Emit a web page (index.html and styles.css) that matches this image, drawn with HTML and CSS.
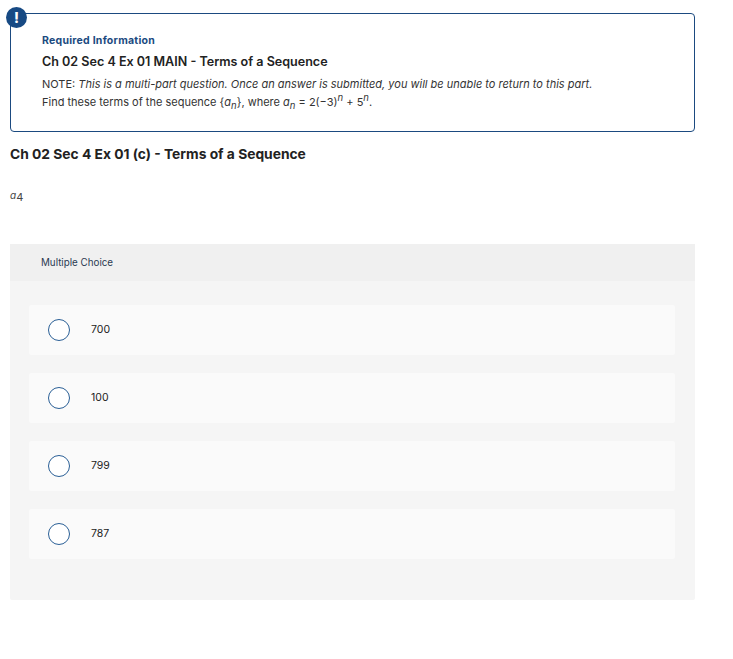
FILE: index.html
```html
<!DOCTYPE html>
<html lang="en">
<head>
    <meta charset="UTF-8">
    <meta name="viewport" content="width=device-width, initial-scale=1.0">
    <title>Ch 02 Sec 4 Ex 01 (c) - Terms of a Sequence</title>
    <link rel="stylesheet" href="styles.css">
</head>
<body>
    <div class="info-box">
        <div class="info-icon">!</div>
        <div class="info-label">Required Information</div>
        <h2 class="info-title">Ch 02 Sec 4 Ex 01 MAIN - Terms of a Sequence</h2>
        <p class="info-note">NOTE: <em>This is a multi-part question. Once an answer is submitted, you will be unable to return to this part.</em></p>
        <p class="info-text">Find these terms of the sequence {<i>a<sub>n</sub></i>}, where <i>a<sub>n</sub></i> = 2(&minus;3)<sup><i>n</i></sup> + 5<sup><i>n</i></sup>.</p>
    </div>

    <h1 class="question-title">Ch 02 Sec 4 Ex 01 (c) - Terms of a Sequence</h1>
    <p class="question-term"><i>a</i><span class="term-index">4</span></p>

    <div class="answer-panel">
        <div class="answer-header">Multiple Choice</div>
        <div class="answer-list">
            <label class="answer-row"><span class="radio"></span><span class="answer-text">700</span></label>
            <label class="answer-row"><span class="radio"></span><span class="answer-text">100</span></label>
            <label class="answer-row"><span class="radio"></span><span class="answer-text">799</span></label>
            <label class="answer-row"><span class="radio"></span><span class="answer-text">787</span></label>
        </div>
    </div>
</body>
</html>
```

FILE: styles.css
```css
* {
    margin: 0;
    padding: 0;
    box-sizing: border-box;
}

body {
    background: #FFFFFF;
    color: #222222;
    font-family: Inter, 'Open Sans', sans-serif;
    padding: 13px 38px 0 10px;
}

.info-box {
    position: relative;
    height: 119px;
    padding: 20px 31px 0;
    border: 1px solid #1B4A80;
    border-radius: 4px;
}

.info-icon {
    position: absolute;
    top: -7px;
    left: -5px;
    width: 21px;
    height: 21px;
    border-radius: 50%;
    background: #174A84;
    color: #FFFFFF;
    font-size: 14px;
    font-weight: 800;
    line-height: 21px;
    text-align: center;
}

.info-label {
    color: #1B4A80;
    font-size: 10.5px;
    font-weight: 700;
    letter-spacing: 0.25px;
    line-height: 14px;
}

.info-title {
    margin-top: 5px;
    font-size: 12.55px;
    font-weight: 600;
    line-height: 18px;
    white-space: nowrap;
}

.info-note,
.info-text {
    font-size: 11px;
    line-height: 17px;
    color: #333333;
    white-space: nowrap;
}

.info-note {
    margin-top: 5px;
}

.info-text {
    line-height: 18px;
}

sub,
sup {
    font-size: 9.5px;
    line-height: 0;
}

.question-title {
    margin-top: 13px;
    font-size: 13.8px;
    font-weight: 700;
    line-height: 18px;
}

.question-term {
    margin-top: 24px;
    font-size: 10px;
    line-height: 16px;
    color: #444444;
}

.term-index {
    font-size: 11px;
    position: relative;
    top: 2px;
}

.answer-panel {
    margin-top: 41px;
    height: 356px;
    background: #F5F5F5;
    border-radius: 2px;
}

.answer-header {
    height: 37px;
    padding-left: 31px;
    background: #F0F0F0;
    font-size: 9.8px;
    line-height: 37px;
    color: #2A3A50;
}

.answer-list {
    display: flex;
    flex-direction: column;
    gap: 18px;
    padding: 24px 20px 0 19px;
}

.answer-row {
    display: flex;
    align-items: center;
    gap: 21px;
    height: 50px;
    padding-left: 19px;
    background: #FAFAFA;
    border-radius: 2px;
    font-size: 10.5px;
    color: #222222;
}

.radio {
    width: 22px;
    height: 22px;
    border: 1.5px solid #2A5F96;
    border-radius: 50%;
    background: #FFFFFF;
}

.answer-text {
    margin-top: -2px;
}
```
